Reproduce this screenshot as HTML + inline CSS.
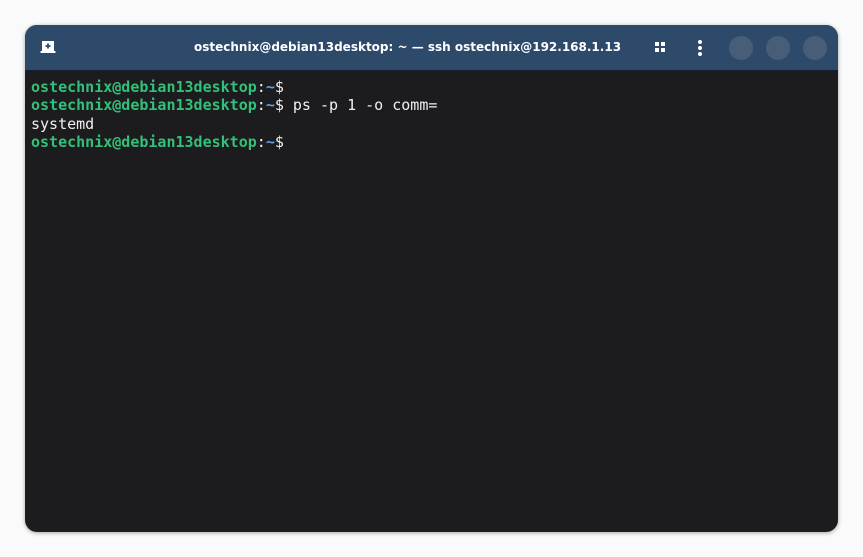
<!DOCTYPE html>
<html><head><style>
body{margin:0;width:863px;height:557px;background:#fafafa;position:relative;overflow:hidden}
.win{position:absolute;left:25px;top:25px;width:813px;height:507px;border-radius:12px;background:#1c1c1e;overflow:hidden;box-shadow:0 1px 4px rgba(0,0,0,.35)}
.hd{height:45px;background:#2e4a6b;position:relative;border-bottom:1px solid #15202e}
.title{position:absolute;left:169px;top:15px;white-space:nowrap;color:#fff;font:bold 12px "DejaVu Sans",sans-serif}
.c{position:absolute;top:11px;width:24px;height:24px;border-radius:50%;background:#475d78}
pre{margin:0;position:absolute;left:6px;top:53px;font:15px/18.3px "DejaVu Sans Mono",monospace;color:#f0f0f0}
.g{color:#33c07a;font-weight:bold}.b{color:#5ea0e8;font-weight:bold}
</style></head><body>
<div class="win">
<div class="hd">
<svg style="position:absolute;left:15px;top:15px" width="16" height="14" viewBox="0 0 16 14"><path d="M2 1h12v10h1.5v2H.5v-2H2z" fill="#fff"/><path d="M8 3.5v5M5.5 6h5" stroke="#2e4a6b" stroke-width="1.8"/></svg>
<div class="title">ostechnix@debian13desktop: ~ — ssh ostechnix@192.168.1.13</div>
<svg style="position:absolute;left:630px;top:17px" width="11" height="11"><rect x="0" y="0" width="4" height="4" fill="#fff"/><rect x="6" y="0" width="4" height="4" fill="#fff"/><rect x="0" y="6" width="4" height="4" fill="#fff"/><rect x="6" y="6" width="4" height="4" fill="#fff"/></svg>
<svg style="position:absolute;left:672px;top:14px" width="6" height="18"><circle cx="3" cy="3" r="2" fill="#fff"/><circle cx="3" cy="9" r="2" fill="#fff"/><circle cx="3" cy="15" r="2" fill="#fff"/></svg>
<div class="c" style="left:704px"></div><div class="c" style="left:741px"></div><div class="c" style="left:778px"></div>
</div>
<pre><span class="g">ostechnix@debian13desktop</span>:<span class="b">~</span>$
<span class="g">ostechnix@debian13desktop</span>:<span class="b">~</span>$ ps -p 1 -o comm=
systemd
<span class="g">ostechnix@debian13desktop</span>:<span class="b">~</span>$</pre>
</div>
</body></html>
